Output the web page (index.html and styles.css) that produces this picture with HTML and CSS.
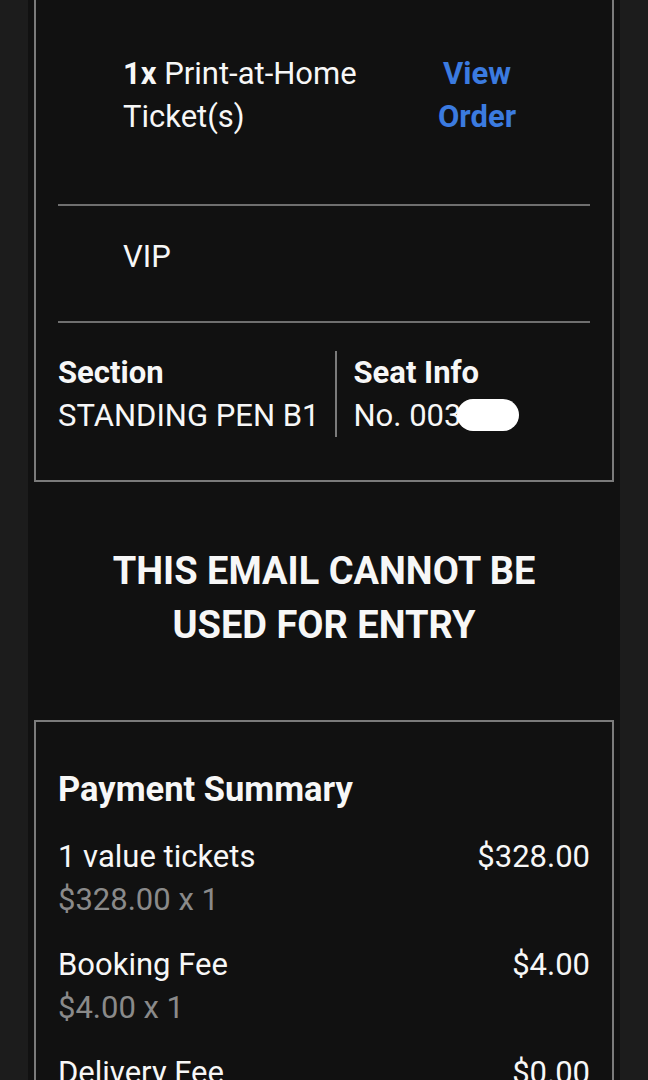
FILE: index.html
```html
<!DOCTYPE html>
<html lang="en">
<head>
    <meta charset="UTF-8">
    <meta name="viewport" content="width=device-width, initial-scale=1.0">
    <title>Your Tickets</title>
    <link rel="stylesheet" href="styles.css">
</head>
<body>
    <div class="page">
        <section class="card card-cont">
            <div class="item-row">
                <div class="item-name"><strong>1x</strong> Print-at-Home Ticket(s)</div>
                <a class="view-order" href="#">View Order</a>
            </div>
            <hr class="rule">
            <div class="ticket-type">VIP</div>
            <hr class="rule">
            <div class="seat-row">
                <div class="seat-col first">
                    <div class="label">Section</div>
                    <div>STANDING PEN B1</div>
                </div>
                <div class="seat-col">
                    <div class="label">Seat Info</div>
                    <div>No. 003<span class="blot"></span></div>
                </div>
            </div>
        </section>

        <h2 class="notice">THIS EMAIL CANNOT BE USED FOR ENTRY</h2>

        <section class="card summary">
            <h3>Payment Summary</h3>
            <div class="line">
                <div>
                    <div>1 value tickets</div>
                    <div class="muted">$328.00 x 1</div>
                </div>
                <div>$328.00</div>
            </div>
            <div class="line">
                <div>
                    <div>Booking Fee</div>
                    <div class="muted">$4.00 x 1</div>
                </div>
                <div>$4.00</div>
            </div>
            <div class="line">
                <div>
                    <div>Delivery Fee</div>
                    <div class="muted">$0.00 x 1</div>
                </div>
                <div>$0.00</div>
            </div>
        </section>
    </div>
</body>
</html>
```

FILE: styles.css
```css
body {
    margin: 0;
    background-color: #1c1c1c;
    font-family: Roboto, "Liberation Sans", sans-serif;
    color: #f7f7f7;
    font-size: 31px;
    line-height: 43px;
}
.page {
    width: 592px;
    margin-left: 28px;
    min-height: 1080px;
    background-color: #111;
    overflow: hidden;
}
.card {
    margin: 0 6px;
    border: 2px solid #7b7b7b;
    padding: 0 22px;
}
.card-cont {
    border-top: 0;
    padding-top: 52px;
    padding-bottom: 43px;
}
.item-row {
    display: grid;
    grid-template-columns: 290px 128px;
    padding-left: 65px;
}
.view-order {
    color: #3b7be0;
    font-weight: bold;
    text-decoration: none;
    text-align: center;
}
.rule {
    border: 0;
    height: 2px;
    background-color: #6f6f6f;
    margin: 0;
}
.item-row + .rule {
    margin-top: 66px;
}
.ticket-type {
    padding-left: 65px;
    margin: 29px 0 43px;
}
.seat-row {
    display: flex;
    margin-top: 28px;
}
.seat-col {
    padding-left: 16px;
    border-left: 2px solid #7b7b7b;
}
.seat-col.first {
    padding: 0 16px 0 0;
    border-left: 0;
}
.label {
    font-weight: bold;
}
.blot {
    display: inline-block;
    width: 62px;
    height: 32px;
    margin-left: -4px;
    vertical-align: -5px;
    background-color: #fff;
    border-radius: 16px;
}
.notice {
    margin: 62px 0 68px;
    text-align: center;
    font-size: 38px;
    line-height: 54px;
    font-weight: bold;
    padding: 0 60px;
}
.summary {
    padding-top: 46px;
    padding-bottom: 40px;
}
.summary h3 {
    margin: 0 0 24px;
    font-size: 34.5px;
    line-height: 43px;
}
.line {
    display: flex;
    justify-content: space-between;
    margin-bottom: 22px;
}
.muted {
    color: #8a8a8a;
}
```
